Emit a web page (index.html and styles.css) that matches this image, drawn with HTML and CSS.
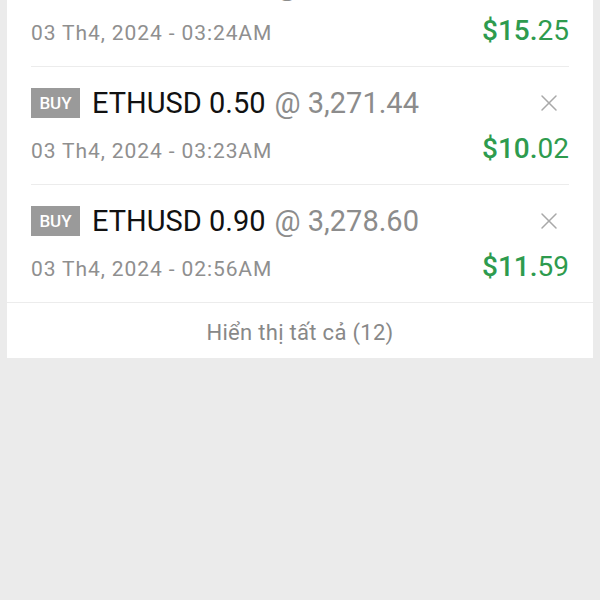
FILE: index.html
```html
<!DOCTYPE html>
<html lang="vi">
<head>
    <meta charset="UTF-8">
    <meta name="viewport" content="width=device-width, initial-scale=1.0">
    <title>Lệnh đã đóng</title>
    <link rel="stylesheet" href="styles.css">
</head>
<body>
    <div class="orders-card">
        <div class="order-row">
            <div class="order-head">
                <span class="side-badge">BUY</span>
                <span class="order-symbol">ETHUSD 0.40</span>
                <span class="order-price">@ 3,275.10</span>
                <span class="close-btn">
                    <svg width="18" height="18" viewBox="0 0 18 18" fill="none" stroke="currentColor" stroke-width="1.5" stroke-linecap="round">
                        <line x1="2" y1="2" x2="16" y2="16"></line>
                        <line x1="16" y1="2" x2="2" y2="16"></line>
                    </svg>
                </span>
            </div>
            <div class="order-info">
                <span class="order-date">03 Th4, 2024 - 03:24AM</span>
                <span class="order-profit"><b>$15.</b>25</span>
            </div>
        </div>

        <div class="order-row">
            <div class="order-head">
                <span class="side-badge">BUY</span>
                <span class="order-symbol">ETHUSD 0.50</span>
                <span class="order-price">@ 3,271.44</span>
                <span class="close-btn">
                    <svg width="18" height="18" viewBox="0 0 18 18" fill="none" stroke="currentColor" stroke-width="1.5" stroke-linecap="round">
                        <line x1="2" y1="2" x2="16" y2="16"></line>
                        <line x1="16" y1="2" x2="2" y2="16"></line>
                    </svg>
                </span>
            </div>
            <div class="order-info">
                <span class="order-date">03 Th4, 2024 - 03:23AM</span>
                <span class="order-profit"><b>$10.</b>02</span>
            </div>
        </div>

        <div class="order-row">
            <div class="order-head">
                <span class="side-badge">BUY</span>
                <span class="order-symbol">ETHUSD 0.90</span>
                <span class="order-price">@ 3,278.60</span>
                <span class="close-btn">
                    <svg width="18" height="18" viewBox="0 0 18 18" fill="none" stroke="currentColor" stroke-width="1.5" stroke-linecap="round">
                        <line x1="2" y1="2" x2="16" y2="16"></line>
                        <line x1="16" y1="2" x2="2" y2="16"></line>
                    </svg>
                </span>
            </div>
            <div class="order-info">
                <span class="order-date">03 Th4, 2024 - 02:56AM</span>
                <span class="order-profit"><b>$11.</b>59</span>
            </div>
        </div>

        <div class="orders-footer">Hiển thị tất cả (12)</div>
    </div>
</body>
</html>
```

FILE: styles.css
```css
* {
    margin: 0;
    padding: 0;
    box-sizing: border-box;
    font-family: Roboto, 'Noto Sans', sans-serif;
}

body {
    background-color: #ebebeb;
    height: 100vh;
    overflow: hidden;
}

.orders-card {
    background-color: white;
    margin: -51px 7px 0;
}

.order-row {
    margin: 0 24px;
    padding: 18px 0 19px;
    border-top: 1px solid #ececec;
}

.order-row:first-child {
    border-top: none;
}

.order-head {
    display: flex;
    align-items: center;
    height: 36px;
}

.side-badge {
    background-color: #9a9a9a;
    color: white;
    font-size: 17px;
    font-weight: 500;
    width: 49px;
    height: 30px;
    line-height: 30px;
    text-align: center;
    margin-right: 12px;
}

.order-symbol {
    font-size: 29px;
    color: #111;
    line-height: 36px;
}

.order-price {
    font-size: 29px;
    color: #8c8c8c;
    line-height: 36px;
    margin-left: 9px;
}

.close-btn {
    margin-left: auto;
    margin-right: 11px;
    color: #a9a9a9;
    display: flex;
}

.order-info {
    display: flex;
    align-items: baseline;
    justify-content: space-between;
    margin-top: 12px;
    height: 32px;
}

.order-date {
    font-size: 21px;
    letter-spacing: 0.9px;
    color: #8f8f8f;
}

.order-profit {
    font-size: 28px;
    line-height: 32px;
    color: #2e9b4e;
}

.order-profit b {
    font-weight: 500;
}

.orders-footer {
    border-top: 1px solid #ececec;
    height: 56px;
    padding-top: 3px;
    display: flex;
    align-items: center;
    justify-content: center;
    font-size: 22px;
    letter-spacing: 0.3px;
    color: #888;
}
```
